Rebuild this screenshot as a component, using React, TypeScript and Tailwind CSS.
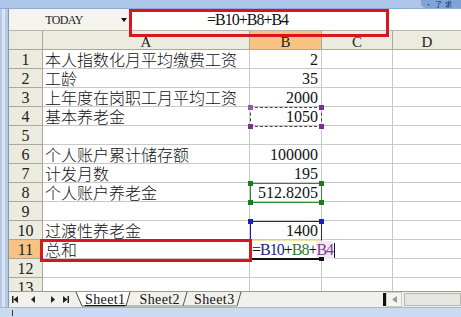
import React from "react";

const rows: { n: number; a: string; b: string }[] = [
  { n: 1, a: "本人指数化月平均缴费工资", b: "2" },
  { n: 2, a: "工龄", b: "35" },
  { n: 3, a: "上年度在岗职工月平均工资", b: "2000" },
  { n: 4, a: "基本养老金", b: "1050" },
  { n: 5, a: "", b: "" },
  { n: 6, a: "个人账户累计储存额", b: "100000" },
  { n: 7, a: "计发月数", b: "195" },
  { n: 8, a: "个人账户养老金", b: "512.8205" },
  { n: 9, a: "", b: "" },
  { n: 10, a: "过渡性养老金", b: "1400" },
  { n: 11, a: "总和", b: "" },
  { n: 12, a: "", b: "" },
];

function Corner({ cls }: { cls: string }) {
  return <div className={`absolute w-[5px] h-[5px] ${cls}`} />;
}

function Row({ n, a, b }: { n: number; a: string; b: string }) {
  const hl = n === 11;
  return (
    <div className="flex h-[19px] shrink-0">
      <div
        className={`w-[34px] shrink-0 border-r border-b border-[#aca899] flex items-center justify-center pt-[1px] font-['Liberation_Serif',serif] text-[16px] leading-[18px] text-[#222] ${
          hl ? "bg-[#f7c282]" : "bg-[#ecebdf]"
        }`}
      >
        {n}
      </div>
      <div className="w-[207px] shrink-0 border-r border-b border-[#c9c9c9] overflow-hidden whitespace-nowrap pl-[2px] text-[16px] leading-[18px] text-[#111] font-['Noto_Sans_CJK_SC',sans-serif] font-light">
        {a}
      </div>
      <div className="w-[72px] shrink-0 border-r border-b border-[#c9c9c9] text-right pr-[3px] font-['Liberation_Serif',serif] text-[16px] leading-[19px] text-[#111]">
        {b}
      </div>
      <div className="w-[71px] shrink-0 border-r border-b border-[#c9c9c9]" />
      <div className="w-[68px] shrink-0 border-b border-[#c9c9c9]" />
    </div>
  );
}

export default function App() {
  return (
    <div className="w-[461px] h-[317px] overflow-hidden flex flex-col bg-white relative font-['Liberation_Serif',serif]">
      {/* top strip */}
      <div className="h-[9px] shrink-0 bg-[#adc5e8] border-b border-[#8fa9d0] flex justify-end">
        <div className="w-[40px] h-[8px] rounded-bl-[5px] bg-[#7fa3d6] overflow-hidden flex items-center gap-[3px] pl-[4px] text-[7px] leading-[8px] text-[#1d2f5a] font-['Noto_Sans_CJK_SC',sans-serif]">
          <span>•</span>
          <span>了</span>
          <span>求</span>
        </div>
      </div>

      <div className="flex flex-1 min-h-0">
        {/* left frame */}
        <div className="w-[9px] shrink-0 bg-[#b7c9e4] border-r border-[#7f97bd] flex">
          <div className="w-[3px] ml-[2px] bg-[#d9e4f4]" />
        </div>

        <div className="flex-1 flex flex-col min-w-0">
          {/* formula bar */}
          <div className="h-[22px] shrink-0 flex bg-[#f4f3ee] border-b border-[#b9b6a6]">
            <div className="w-[110px] shrink-0 flex items-center justify-center font-['Liberation_Serif',serif] text-[12px] tracking-[-0.6px] text-[#222]">
              TODAY
            </div>
            <div className="w-[10px] shrink-0 flex items-center justify-center">
              <svg width="6" height="4" viewBox="0 0 6 4">
                <polygon points="0,0 6,0 3,4" fill="#111" />
              </svg>
            </div>
            <div className="flex-1 bg-white flex items-center pl-[78px] font-['Liberation_Serif',serif] text-[16px] tracking-[-1px] text-[#111]">
              =B10+B8+B4
            </div>
          </div>

          {/* grid */}
          <div className="flex flex-col">
            <div className="flex h-[19px] shrink-0 font-['Liberation_Serif',serif]">
              <div className="w-[34px] shrink-0 border-r border-b border-[#aca899] bg-[#ecebdf]" />
              <div className="w-[207px] shrink-0 border-r border-b border-[#aca899] bg-[#ecebdf] flex items-center justify-center pt-[4px] text-[15px] text-[#222]">
                A
              </div>
              <div className="w-[72px] shrink-0 border-r border-b border-[#aca899] bg-[#f7c282] flex items-center justify-center pt-[4px] text-[15px] text-[#222]">
                B
              </div>
              <div className="w-[71px] shrink-0 border-r border-b border-[#aca899] bg-[#ecebdf] flex items-center justify-center pt-[4px] text-[15px] text-[#222]">
                C
              </div>
              <div className="w-[68px] shrink-0 border-b border-[#aca899] bg-[#ecebdf] flex items-center justify-center pt-[4px] text-[15px] text-[#222]">
                D
              </div>
            </div>
            {rows.map((r) => (
              <Row key={r.n} {...r} />
            ))}
            {/* partial row 13 */}
            <div className="flex h-[13px] shrink-0 overflow-hidden">
              <div className="w-[34px] shrink-0 border-r border-[#aca899] bg-[#ecebdf] flex justify-center pt-[1px] font-['Liberation_Serif',serif] text-[16px] leading-[18px] text-[#222]">
                13
              </div>
              <div className="w-[207px] shrink-0 border-r border-[#c9c9c9]" />
              <div className="w-[72px] shrink-0 border-r border-[#c9c9c9]" />
              <div className="w-[71px] shrink-0 border-r border-[#c9c9c9]" />
              <div className="w-[68px] shrink-0" />
            </div>
          </div>

          {/* sheet tab bar */}
          <div className="h-[16px] shrink-0 flex bg-[#f1f0ea] border-t border-[#9d9a8c]">
            <div className="w-[64px] shrink-0 flex items-center">
              <svg width="64" height="15" viewBox="0 0 64 15">
                <rect x="3" y="4" width="1.5" height="7" fill="#222" />
                <polygon points="4.5,7.5 9,4 9,11" fill="#222" />
                <polygon points="22,7.5 26,4 26,11" fill="#222" />
                <polygon points="42,4 46,7.5 42,11" fill="#222" />
                <polygon points="54,4 58.5,7.5 54,11" fill="#222" />
                <rect x="58.5" y="4" width="1.5" height="7" fill="#222" />
              </svg>
            </div>
            <div className="relative w-[170px] shrink-0 flex items-start font-['Liberation_Serif',serif] text-[14px] leading-[15px] tracking-[0.4px] text-[#111]">
              <svg className="absolute left-0 top-0" width="170" height="15" viewBox="0 0 170 15">
                <polygon points="3,0 57,0 53,14 9,14" fill="#ffffff" />
                <polyline points="3,0 9,14 53,14 57,0" fill="none" stroke="#444" strokeWidth="1" />
                <polyline points="110,14 114,0" fill="none" stroke="#555" strokeWidth="1" />
                <polyline points="164,14 168,0" fill="none" stroke="#555" strokeWidth="1" />
                <polyline points="53,14 164,14" fill="none" stroke="#888" strokeWidth="1" />
              </svg>
              <span className="relative ml-[12px] underline">Sheet1</span>
              <span className="relative ml-[14px]">Sheet2</span>
              <span className="relative ml-[14px]">Sheet3</span>
            </div>
            <div className="flex-1" />
            <div className="w-[3px] shrink-0 bg-[#111] my-[1px]" />
            <div className="w-[16px] shrink-0 flex items-center justify-center bg-[#f4f4f0] border border-[#d0d0c8]">
              <svg width="5" height="7" viewBox="0 0 5 7">
                <polygon points="0,3.5 5,0 5,7" fill="#9a9a9a" />
              </svg>
            </div>
            <div className="w-[57px] shrink-0 ml-[2px] my-[1px] bg-[#e6e6e0] border border-[#b8b8b0]" />
          </div>
        </div>
      </div>

      {/* bottom strip */}
      <div className="h-[10px] shrink-0 bg-[#c9daf2] border-t border-[#9fb7dc] flex items-center">
        <div className="ml-[12px] w-[1px] h-[6px] bg-[#333]" />
      </div>

      {/* range highlight: B4 (marching ants) */}
      <div className="absolute left-[250px] top-[107px] w-[72px] h-[20px] border border-dashed border-[#444]">
        <Corner cls="-left-[3px] -top-[3px] bg-[#9a5ab0]" />
        <Corner cls="-right-[3px] -top-[3px] bg-[#7d2f96]" />
        <Corner cls="-left-[3px] -bottom-[3px] bg-[#7d2f96]" />
        <Corner cls="-right-[3px] -bottom-[3px] bg-[#7d2f96]" />
      </div>

      {/* B8 green */}
      <div className="absolute left-[250px] top-[183px] w-[72px] h-[20px] border-[1.5px] border-[#2e8b2e]">
        <Corner cls="-left-[3px] -top-[3px] bg-[#1f7a1f]" />
        <Corner cls="-right-[3px] -top-[3px] bg-[#1f7a1f]" />
        <Corner cls="-left-[3px] -bottom-[3px] bg-[#1f7a1f]" />
        <Corner cls="-right-[3px] -bottom-[3px] bg-[#1f7a1f]" />
      </div>

      {/* B10 blue */}
      <div className="absolute left-[250px] top-[221px] w-[72px] h-[20px] border-[1.5px] border-[#1c1cb8] border-b-[#ece7a8]">
        <Corner cls="-left-[3px] -top-[3px] bg-[#1c1cc8]" />
        <Corner cls="-right-[3px] -top-[3px] bg-[#1c1cc8]" />
      </div>

      {/* B11 in-cell edit */}
      <div className="absolute left-[250px] top-[241px] w-[85px] h-[18px] bg-white flex items-center pl-[2px] font-['Liberation_Serif',serif] text-[16px] tracking-[-1px] leading-[18px]">
        <span className="text-[#111]">=</span>
        <span className="text-[#20208a]">B10</span>
        <span className="text-[#111]">+</span>
        <span className="text-[#2f7a2f]">B8</span>
        <span className="text-[#111]">+</span>
        <span className="text-[#7d3d8c] bg-[#f1e8f4]">B4</span>
        <span className="ml-[1px] w-[1px] h-[15px] bg-[#111]" />
      </div>
      <div className="absolute left-[250px] top-[258px] w-[72px] h-[2px] bg-[#111]" />
      <div className="absolute left-[319px] top-[257px] w-[5px] h-[4px] bg-[#111]" />

      {/* red annotation boxes */}
      <div className="absolute left-[129px] top-[9px] w-[260px] h-[28px] border-[3px] border-[#d9161f]" />
      <div className="absolute left-[40px] top-[239px] w-[212px] h-[23px] border-[3px] border-[#d9161f]" />
    </div>
  );
}
